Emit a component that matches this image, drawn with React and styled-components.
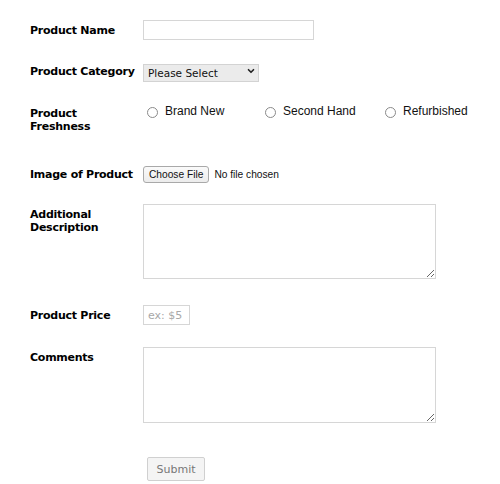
import React from 'react';
import styled, { createGlobalStyle } from 'styled-components';
import { ChevronDown } from 'lucide-react';

const GlobalStyle = createGlobalStyle`
    body {
        margin: 0;
        background: #fff;
        font-family: 'DejaVu Sans', Verdana, sans-serif;
    }
`;

const Form = styled.form`
    display: flex;
    flex-direction: column;
    gap: 22px;
    padding: 20px 0 0 30px;
`;

const Row = styled.div`
    display: grid;
    grid-template-columns: 113px 1fr;
    align-items: start;
    margin-top: ${(p) => p.$extra || 0}px;
`;

const Label = styled.label`
    padding-top: ${(p) => (p.$top !== undefined ? p.$top : 4)}px;
    font-size: 11px;
    line-height: 13px;
    letter-spacing: -0.25px;
    font-weight: bold;
    color: #000;
`;

const TextInput = styled.input`
    box-sizing: border-box;
    width: ${(p) => p.$width}px;
    height: 20px;
    margin: 0;
    padding: 2px 4px;
    border: 1px solid #d6d6d6;
    font-family: 'DejaVu Sans', Verdana, sans-serif;
    font-size: 11px;
    color: #333;
    outline: none;

    &::placeholder {
        color: #a8a8a8;
    }
`;

const SelectWrap = styled.div`
    position: relative;
    width: 116px;
    height: 18px;

    svg {
        position: absolute;
        right: 3px;
        top: 4px;
        pointer-events: none;
    }
`;

const Select = styled.select`
    appearance: none;
    box-sizing: border-box;
    width: 100%;
    height: 100%;
    margin: 0;
    padding: 0 0 0 4px;
    border: 1px solid #d3d3d3;
    border-radius: 0;
    background: #ebebeb;
    font-family: 'DejaVu Sans', Verdana, sans-serif;
    font-size: 10.5px;
    color: #111;
`;

const RadioGroup = styled.div`
    display: grid;
    grid-template-columns: 118px 120px 1fr;
    padding-left: 4px;
`;

const RadioOption = styled.label`
    display: flex;
    align-items: center;
    gap: 7px;
    height: 16px;
    font-family: 'Liberation Sans', Arial, sans-serif;
    font-size: 12px;
    color: #111;
`;

const Radio = styled.input`
    appearance: none;
    box-sizing: border-box;
    width: 11px;
    height: 11px;
    margin: 2px 0 0 0;
    border: 1px solid #8a8a8a;
    border-radius: 50%;
    background: #fff;
    flex-shrink: 0;
`;

const FileRow = styled.div`
    display: flex;
    align-items: center;
    gap: 5px;
    height: 20px;
    font-family: 'Liberation Sans', Arial, sans-serif;
    font-size: 10.2px;
    color: #111;
`;

const FileButton = styled.button`
    height: 17px;
    padding: 0 5px;
    border: 1px solid #a9a9a9;
    border-radius: 3px;
    background: linear-gradient(#fafafa, #ececec);
    font-family: 'Liberation Sans', Arial, sans-serif;
    font-size: 10.2px;
    color: #111;
`;

const TextArea = styled.textarea`
    box-sizing: border-box;
    display: block;
    width: 293px;
    height: ${(p) => p.$height}px;
    margin: 0;
    border: 1px solid #d6d6d6;
    resize: both;
    outline: none;
`;

const SubmitButton = styled.button`
    box-sizing: border-box;
    width: 58px;
    height: 24px;
    margin-left: 4px;
    border: 1px solid #d0d0d0;
    border-radius: 2px;
    background: #f4f4f4;
    font-family: 'DejaVu Sans', Verdana, sans-serif;
    font-size: 11px;
    color: #777;
`;

const freshness = ['Brand New', 'Second Hand', 'Refurbished'];

const App = () => {
    return (
        <>
            <GlobalStyle />
            <Form onSubmit={(e) => e.preventDefault()}>
                <Row>
                    <Label htmlFor='name'>Product Name</Label>
                    <TextInput id='name' $width={171} />
                </Row>
                <Row>
                    <Label htmlFor='category' $top={3}>Product Category</Label>
                    <SelectWrap>
                        <Select id='category'>
                            <option>Please Select</option>
                        </Select>
                        <ChevronDown size={10} strokeWidth={4} color='#222' />
                    </SelectWrap>
                </Row>
                <Row $extra={1}>
                    <Label>
                        Product
                        <br />
                        Freshness
                    </Label>
                    <RadioGroup>
                        {freshness.map((f) => (
                            <RadioOption key={f}>
                                <Radio type='radio' name='freshness' />
                                {f}
                            </RadioOption>
                        ))}
                    </RadioGroup>
                </Row>
                <Row $extra={9}>
                    <Label>Image of Product</Label>
                    <FileRow>
                        <FileButton type='button'>Choose File</FileButton>
                        <span>No file chosen</span>
                    </FileRow>
                </Row>
                <Row $extra={-2}>
                    <Label htmlFor='description'>
                        Additional
                        <br />
                        Description
                    </Label>
                    <TextArea id='description' $height={75} />
                </Row>
                <Row $extra={4}>
                    <Label htmlFor='price'>Product Price</Label>
                    <TextInput id='price' placeholder='ex: $5' $width={47} />
                </Row>
                <Row>
                    <Label htmlFor='comments'>Comments</Label>
                    <TextArea id='comments' $height={76} />
                </Row>
                <Row $extra={12}>
                    <span />
                    <div>
                        <SubmitButton type='submit'>Submit</SubmitButton>
                    </div>
                </Row>
            </Form>
        </>
    );
};

export default App;
